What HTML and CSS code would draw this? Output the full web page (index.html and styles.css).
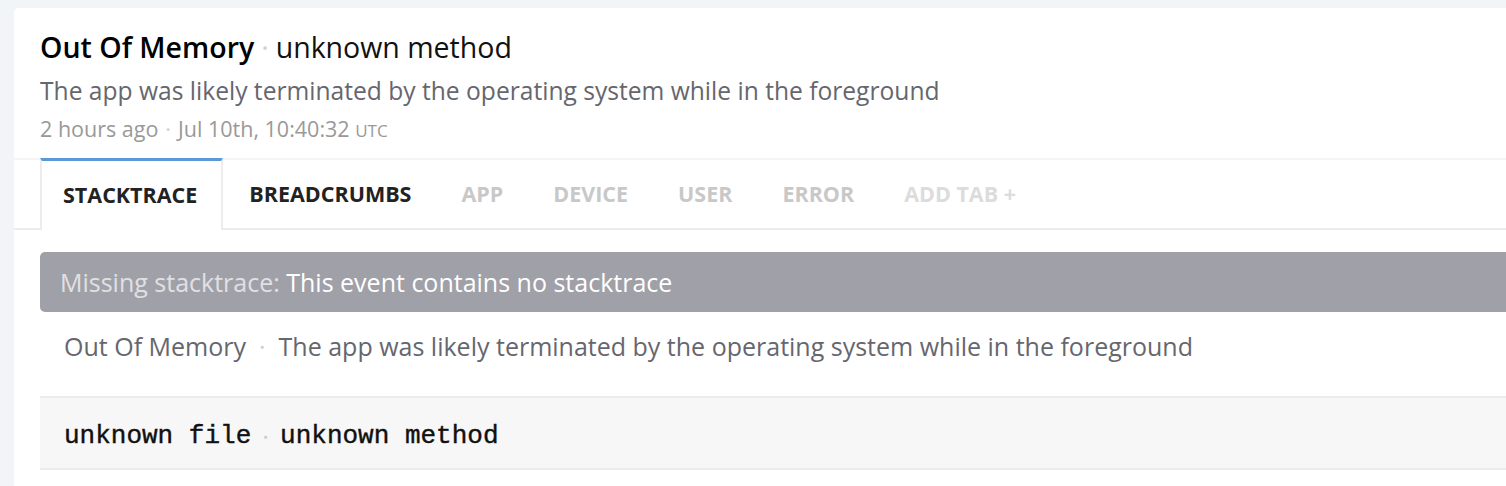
FILE: index.html
```html
<!DOCTYPE html>
<html>
<head>
<meta charset="utf-8">
<link rel="stylesheet" href="styles.css">
</head>
<body>
<div class="page">
  <div class="card">
    <header class="head">
      <h1 class="title"><strong>Out Of Memory</strong><span class="dot">·</span><span class="method">unknown method</span></h1>
      <p class="subtitle">The app was likely terminated by the operating system while in the foreground</p>
      <p class="time">2 hours ago<span class="dot">·</span>Jul 10th, 10:40:32 <span class="utc">UTC</span></p>
    </header>
    <nav class="tabs">
      <a class="tab active">STACKTRACE</a>
      <a class="tab dark">BREADCRUMBS</a>
      <a class="tab">APP</a>
      <a class="tab">DEVICE</a>
      <a class="tab">USER</a>
      <a class="tab">ERROR</a>
      <a class="tab add">ADD TAB +</a>
    </nav>
    <section class="content">
      <div class="banner"><span class="banner-label">Missing stacktrace:</span> This event contains no stacktrace</div>
      <p class="summary">Out Of Memory<span class="dot">·</span>The app was likely terminated by the operating system while in the foreground</p>
      <div class="frame">unknown file<span class="dot">·</span>unknown method</div>
    </section>
  </div>
</div>
</body>
</html>
```
FILE: styles.css
```css
html, body {
  margin: 0;
  padding: 0;
  background: #f2f5f8;
  height: 100%;
  overflow: hidden;
}
.page {
  padding: 8px 0 0 14px;
}
.card {
  background: #fff;
  border-top-left-radius: 5px;
  min-height: 480px;
  font-family: "Open Sans", "Noto Sans", sans-serif;
}
.head {
  padding: 22px 0 0 26px;
  height: 150px;
  box-sizing: border-box;
}
.title {
  margin: 0;
  font-size: 28.5px;
  line-height: 34px;
  font-weight: 400;
  color: #111;
}
.title strong {
  font-weight: 600;
  color: #000;
}
.dot {
  color: #d0d0d0;
  padding: 0 7px;
}
.subtitle {
  margin: 12px 0 0;
  font-size: 24.6px;
  line-height: 30px;
  color: #66666e;
}
.time {
  margin: 10px 0 0;
  font-size: 21.5px;
  line-height: 26px;
  color: #999;
}
.time .dot { padding: 0 7px; }
.utc {
  font-size: 17px;
}
.tabs {
  display: flex;
  border-top: 2px solid #f5f5f5;
  border-bottom: 2px solid #ebebeb;
  height: 72px;
  padding-left: 26px;
  box-sizing: border-box;
}
.tab {
  display: flex;
  align-items: center;
  padding: 0 25px 2px;
  font-size: 21.5px;
  font-weight: 700;
  color: #c8c8c8;
}
.tab.active {
  color: #222;
  background: #fff;
  border-top: 3px solid #5b9bd5;
  border-left: 2px solid #ececec;
  border-right: 2px solid #ececec;
  margin-top: -2px;
  margin-bottom: -2px;
  padding: 0 24px 2px 21px;
}
.tab.dark { color: #222; padding-left: 26px; }
.tab.add { color: #dcdcdc; }
.content {
  padding: 22px 0 0 26px;
}
.banner {
  background: #a0a0a8;
  color: #fff;
  border-radius: 5px 0 0 5px;
  height: 60px;
  display: flex;
  align-items: center;
  padding-left: 20px;
  font-size: 25px;
  white-space: pre;
}
.banner-label {
  color: #e0e0e4;
}
.summary {
  margin: 0;
  height: 86px;
  padding: 17px 0 0 24px;
  font-size: 25px;
  line-height: 34px;
  color: #66666e;
  border-bottom: 2px solid #ebebeb;
  box-sizing: border-box;
}
.summary .dot { padding: 0 13px; }
.frame {
  background: #f7f7f7;
  height: 72px;
  display: flex;
  align-items: center;
  padding: 5px 0 0 24px;
  font-family: "Liberation Mono", "Courier New", monospace;
  font-size: 26px;
  font-weight: 400;
  -webkit-text-stroke: 0.4px #111;
  color: #111;
  border-bottom: 2px solid #ebebeb;
  box-sizing: border-box;
}
.frame .dot {
  padding: 0 11px;
  color: #ccc;
  -webkit-text-stroke: 0;
  font-family: "Open Sans", sans-serif;
}
```
